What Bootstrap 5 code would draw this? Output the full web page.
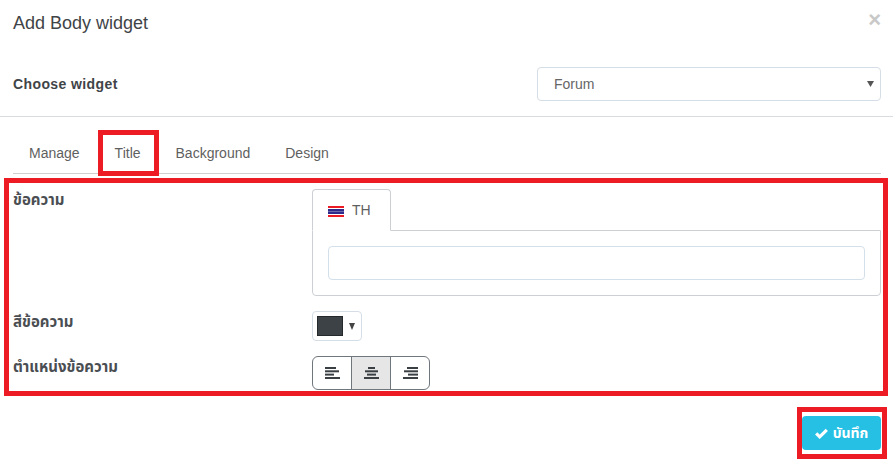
<!DOCTYPE html>
<html lang="th">
<head>
<meta charset="utf-8">
<title>Add Body widget</title>
<link href="https://cdn.jsdelivr.net/npm/bootstrap@5.3.0/dist/css/bootstrap.min.css" rel="stylesheet">
<style>
html,body{background:#fff;overflow:hidden}
body{font-family:"Liberation Sans",Arial,"Noto Sans Thai","Noto Sans",sans-serif;font-size:14px;color:#3f4448;width:893px;height:465px}
.dlg-head{height:67px;padding:11px 13px 0;display:flex;justify-content:space-between;align-items:flex-start}
.dlg-title{font-size:18px;line-height:24px;margin:0;font-weight:400;color:#3f4448}
.dlg-close{font-size:22px;font-weight:700;line-height:18px;color:#c8c8c8;margin-right:-1px;padding:0;border:0;background:none}
.pick-row{padding:0 12px 15px 13px;display:flex;justify-content:space-between;align-items:center;border-bottom:1px solid #d8dcdf;box-sizing:content-box;height:34px}
.pick-label{font-weight:700;font-size:14px;letter-spacing:.4px;color:#3f4448;margin:0}
.pick-select{width:344px;height:34px;padding:0 24px 0 16px;font-size:14px;color:#666;border:1px solid #d5dee6;border-radius:4px;font-family:inherit;background-image:url("data:image/svg+xml,%3Csvg xmlns='http://www.w3.org/2000/svg' width='8' height='7'%3E%3Cpath d='M0 0h7L3.500 6z' fill='%23555'/%3E%3C/svg%3E");background-size:8px 7px;background-position:right 5px center}
.tab-strip{margin:13px 12px 0 13px;border-bottom:1px solid #d0d0d0;height:44px;flex-wrap:nowrap;gap:2px}
.tab-strip .nav-link{color:#5f5f5f;padding:0 16px;line-height:46px;height:43px;border:0;font-size:14px;background:none}
.tab-strip .nav-item:last-child .nav-link{padding-left:17px}
.tab-strip .tab-marked{border:5px solid #ed1c24;border-radius:0;padding:0 13px 0 12px;height:46px;line-height:36px;margin-bottom:-3px;margin-right:-1px}
.red-frame{border:5px solid #ed1c24;margin:4px 5px 0 4px;padding:6px 2px 1px 4px;height:218px}
.field-row{display:flex}
.field-row + .field-row{margin-top:15px}
.field-label{width:299px;flex:none;font-weight:700;font-size:15px;color:#4a4e52;line-height:21px;margin:0}
.field-body{flex:1;min-width:0}
.lang-tabs{border-bottom:0;position:relative;z-index:1;height:42px}
.lang-tabs .nav-link{width:79px;height:42px;padding:0 15px;line-height:42px;color:#5f5f5f;font-size:14px;border:1px solid #ccd0d4;border-bottom-color:#fff;border-radius:4px 4px 0 0;background:#fff;display:flex;align-items:center;gap:8px;margin:0}
.lang-flag{display:block;flex:none;margin-top:3px}
.lang-panel{border:1px solid #ccd0d4;border-radius:0 0 4px 4px;padding:15px;height:66px;margin-top:-1px}
.lang-input{height:34px;border:1px solid #d3e0ea;border-radius:4px;padding:6px 12px;font-size:14px}
.swatch-btn{width:50px;height:30px;padding:4px;border:1px solid #d5dee6;border-radius:4px;background:#fff;display:flex;align-items:center;gap:5px}
.swatch-fill{display:block;width:26px;height:20px;background:#3d4246;border:1px solid #26292b}
.swatch-caret{border-left:3.500px solid transparent;border-right:3.500px solid transparent;border-top:7px solid #444;display:block;margin-left:1px}
.align-group .btn{width:40px;height:34px;padding:0;border:1px solid #6f767c;display:flex;align-items:center;justify-content:center;background:#fff}
.align-group .btn.active{background:#e6e6e6;border-color:#6f767c}
.save-row{display:flex;justify-content:flex-end;margin:11px 6px 0 0}
.save-frame{border:5px solid #ed1c24;width:90px;height:52px;padding:4px 0 0}
.save-btn{display:flex;align-items:center;justify-content:center;gap:5px;width:79px;height:34px;padding:0;background:#26c0e5;border:0;border-radius:4px;color:#fff;font-weight:700;font-size:14px}
</style>
</head>
<body>
<div class="dlg-head">
  <h1 class="dlg-title">Add Body widget</h1>
  <button type="button" class="dlg-close" aria-label="Close">×</button>
</div>
<div class="pick-row">
  <label class="pick-label" for="wsel">Choose widget</label>
  <select id="wsel" class="form-select pick-select"><option>Forum</option></select>
</div>
<ul class="nav tab-strip">
  <li class="nav-item"><a class="nav-link" href="#">Manage</a></li>
  <li class="nav-item"><a class="nav-link tab-marked" href="#">Title</a></li>
  <li class="nav-item"><a class="nav-link" href="#">Background</a></li>
  <li class="nav-item"><a class="nav-link" href="#">Design</a></li>
</ul>
<div class="red-frame">
  <div class="field-row">
    <label class="field-label">ข้อความ</label>
    <div class="field-body">
      <ul class="nav lang-tabs">
        <li class="nav-item"><a class="nav-link" href="#">
          <svg class="lang-flag" width="16" height="11" viewBox="0 0 16 11"><rect width="16" height="11" fill="#ed1c24"/><rect y="2" width="16" height="7" fill="#fff"/><rect y="3" width="16" height="5" fill="#2d2a8c"/><rect y="5" width="16" height="1" fill="#6a6ab0"/></svg>
          <span>TH</span></a></li>
      </ul>
      <div class="lang-panel"><input type="text" class="form-control lang-input"></div>
    </div>
  </div>
  <div class="field-row">
    <label class="field-label">สีข้อความ</label>
    <div class="field-body"><button type="button" class="btn swatch-btn"><span class="swatch-fill"></span><span class="swatch-caret"></span></button></div>
  </div>
  <div class="field-row">
    <label class="field-label">ตำแหน่งข้อความ</label>
    <div class="field-body">
      <div class="btn-group align-group" role="group">
        <button type="button" class="btn"><svg width="15" height="12" viewBox="0 0 15 12" fill="#3a3f44"><rect width="11" height="2"/><rect y="3.300" width="14" height="2"/><rect y="6.600" width="9" height="2"/><rect y="10" width="15" height="2"/></svg></button>
        <button type="button" class="btn active"><svg width="15" height="12" viewBox="0 0 15 12" fill="#3a3f44"><rect x="4" width="7" height="2"/><rect x="1" y="3.300" width="13" height="2"/><rect x="3" y="6.600" width="9" height="2"/><rect y="10" width="15" height="2"/></svg></button>
        <button type="button" class="btn"><svg width="15" height="12" viewBox="0 0 15 12" fill="#3a3f44"><rect x="4" width="11" height="2"/><rect x="1" y="3.300" width="14" height="2"/><rect x="5" y="6.600" width="10" height="2"/><rect y="10" width="15" height="2"/></svg></button>
      </div>
    </div>
  </div>
</div>
<div class="save-row">
  <div class="save-frame">
    <button type="button" class="save-btn">
      <svg width="13" height="11" viewBox="0 0 13 11"><path d="M1.200 5.300 L4.700 8.800 L11.800 1.800" fill="none" stroke="#fff" stroke-width="3.200"/></svg>
      <span>บันทึก</span>
    </button>
  </div>
</div>
<script src="https://cdn.jsdelivr.net/npm/bootstrap@5.3.0/dist/js/bootstrap.bundle.min.js"></script>
</body>
</html>
